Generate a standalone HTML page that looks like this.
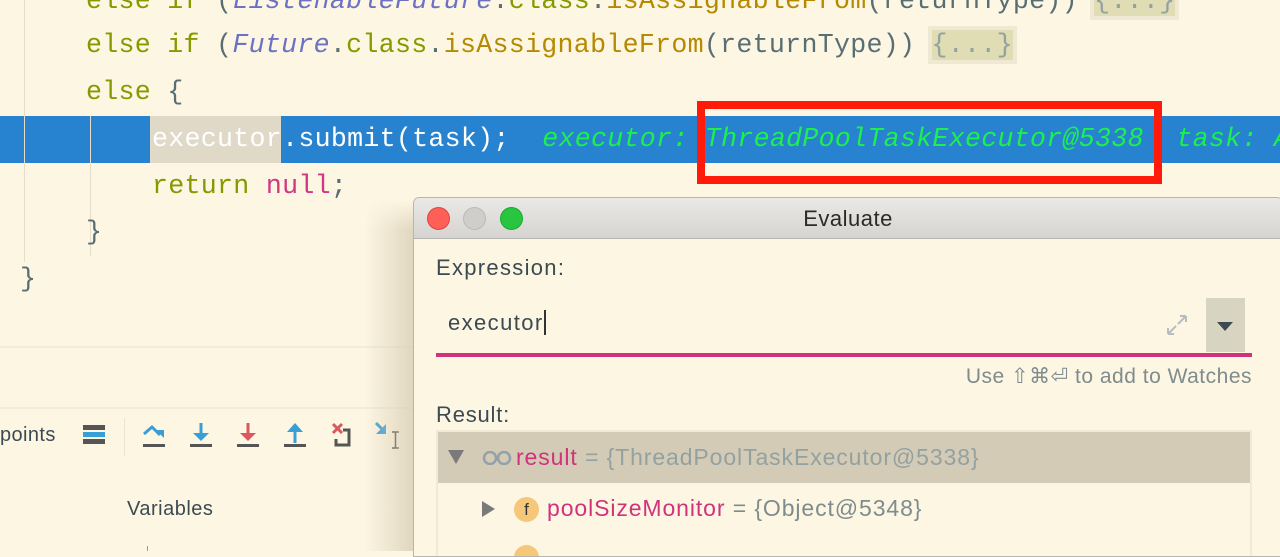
<!DOCTYPE html>
<html><head><meta charset="utf-8"><style>
*{margin:0;padding:0;box-sizing:border-box}
body{width:1280px;height:551px;overflow:hidden;background:#fdf6e3;position:relative;font-family:"Liberation Sans",sans-serif}
.code{position:absolute;font-family:"Liberation Mono","DejaVu Sans Mono",monospace;font-size:26.6px;letter-spacing:0.3px;white-space:pre;line-height:47px;height:47px}
.kw{color:#859900}.cls{color:#6c71c4;font-style:italic}.m{color:#b58900}.p{color:#586e75}.fold{background:#e0ddb4;color:#93a1a1;outline:4px solid #efe9d3}
.abs{position:absolute}
</style></head><body>
<div class="abs" style="left:24px;top:0;width:1px;height:262px;background:#e5ddc8"></div>
<div class="abs" style="left:90px;top:116px;width:1px;height:140px;background:#e5ddc8"></div>
<div class="code" style="left:86px;top:-22px"><span class="kw">else if</span> <span class="p">(</span><span class="cls">ListenableFuture</span><span class="p">.</span><span class="kw">class</span><span class="p">.</span><span class="m">isAssignableFrom</span><span class="p">(returnType))</span> <span class="fold">{...}</span></div>
<div class="code" style="left:86px;top:22px"><span class="kw">else if</span> <span class="p">(</span><span class="cls">Future</span><span class="p">.</span><span class="kw">class</span><span class="p">.</span><span class="m">isAssignableFrom</span><span class="p">(returnType))</span> <span class="fold">{...}</span></div>
<div class="code" style="left:86px;top:69px"><span class="kw">else</span> <span class="p">{</span></div>
<div class="abs" style="left:0;top:116px;width:1280px;height:47px;background:#2783cf"></div>
<div class="abs" style="left:24px;top:116px;width:1px;height:47px;background:#e5ddc8"></div>
<div class="abs" style="left:90px;top:116px;width:1px;height:47px;background:#e5ddc8"></div>
<div class="abs" style="left:150px;top:116px;width:131px;height:47px;background:#e0d9c8"></div>
<div class="code" style="left:152px;top:116px;color:#fff">executor.submit(task);  <span style="color:#1cf04d;font-style:italic">executor: ThreadPoolTaskExecutor@5338  task: A</span></div>
<div class="abs" style="left:697px;top:101px;width:465px;height:83px;border:8px solid #ff1a0a"></div>
<div class="code" style="left:152px;top:163px"><span class="kw">return</span> <span style="color:#d33682">null</span><span class="p">;</span></div>
<div class="code" style="left:86px;top:209px;color:#586e75">}</div>
<div class="code" style="left:20px;top:256px;color:#586e75">}</div>
<div class="abs" style="left:0;top:346px;width:420px;height:2px;background:#f3ecd9"></div>
<div class="abs" style="left:0;top:407px;width:420px;height:2px;background:#f3ecd9"></div>
<div class="abs" style="left:0;top:424px;font-size:20px;letter-spacing:0.4px;color:#3c4a52">points</div>
<div class="abs" style="left:83px;top:425px;width:22px;height:5px;background:#555"></div>
<div class="abs" style="left:83px;top:432px;width:22px;height:5px;background:#389fd6"></div>
<div class="abs" style="left:83px;top:439px;width:22px;height:5px;background:#555"></div>
<div class="abs" style="left:124px;top:418px;width:1px;height:38px;background:#ece4cf"></div>
<svg class="abs" style="left:140px;top:418px" width="270" height="32">
<g stroke-width="3" fill="none">
<path d="M4 16l8-7 8 8" stroke="#389fd6"/><path d="M16 12h8v8z" fill="#389fd6" stroke="none"/><rect x="3" y="26" width="22" height="3" fill="#555" stroke="none"/>
<rect x="50" y="26" width="22" height="3" fill="#555" stroke="none"/><path d="M61 5v14" stroke="#389fd6"/><path d="M53 15h16l-8 8z" fill="#389fd6" stroke="none"/>
<rect x="97" y="26" width="22" height="3" fill="#555" stroke="none"/><path d="M108 5v14" stroke="#db5860"/><path d="M100 15h16l-8 8z" fill="#db5860" stroke="none"/>
<rect x="144" y="26" width="22" height="3" fill="#555" stroke="none"/><path d="M155 25v-12" stroke="#389fd6"/><path d="M147 14h16l-8-9z" fill="#389fd6" stroke="none"/>
<path d="M193 6l9 9M202 6l-9 9" stroke="#db5860"/><path d="M203 12h6v15h-13v-6" stroke="#555"/>
<path d="M236 5l8 8" stroke="#389fd6"/><path d="M236 16h10v-10z" fill="#389fd6" stroke="none"/><path d="M252 14h7M255.5 14v16M252 30h7" stroke="#333" stroke-width="1.5"/>
</g></svg>
<div class="abs" style="left:127px;top:498px;font-size:20px;letter-spacing:0.5px;color:#3c4a52">Variables</div>
<div class="abs" style="left:147px;top:546px;width:1px;height:5px;background:#999"></div>
<div class="abs" style="left:365px;top:200px;width:50px;height:351px;background:linear-gradient(90deg,rgba(253,246,227,0),rgba(215,205,180,0.8));-webkit-mask-image:linear-gradient(rgba(0,0,0,0),#000 30px);mask-image:linear-gradient(rgba(0,0,0,0),#000 30px)"></div>
<div class="abs" style="left:413px;top:197px;width:870px;height:360px;background:#fdf6e3;border:1px solid #b9b5ad;border-radius:6px 6px 0 0;overflow:hidden">
<div style="height:41px;background:linear-gradient(#ebe9e6,#d6d4d1);border-bottom:1px solid #b6b4b0;position:relative;text-align:center;font-size:22px;letter-spacing:0.5px;line-height:41px;color:#2a2a2a">Evaluate
<div class="abs" style="left:13px;top:9px;width:23px;height:23px;border-radius:50%;background:#fe5f57;border:1px solid #e0443e"></div>
<div class="abs" style="left:49px;top:9px;width:23px;height:23px;border-radius:50%;background:#d0cecb;border:1px solid #bcbab6"></div>
<div class="abs" style="left:86px;top:9px;width:23px;height:23px;border-radius:50%;background:#29c440;border:1px solid #1aab2a"></div>
</div>
<div class="abs" style="left:22px;top:57px;font-size:22px;letter-spacing:1.3px;color:#3c4a52">Expression:</div>
<div class="abs" style="left:34px;top:112px;font-size:22px;letter-spacing:1.4px;color:#3c4a52">executor<span style="border-left:2px solid #333;margin-left:0px"></span></div>
<svg class="abs" style="left:750px;top:114px" width="26" height="26"><path d="M4 22l8-8M4 22v-6M4 22h6M22 4l-8 8M22 4v6M22 4h-6" stroke="#b8bcbc" stroke-width="2" fill="none"/></svg>
<div class="abs" style="left:792px;top:100px;width:39px;height:54px;background:#d8d4c2"><svg width="39" height="54"><path d="M11 24h16l-8 9z" fill="#3c4a52"/></svg></div>
<div class="abs" style="left:22px;top:155px;width:816px;height:4px;background:#d0337c"></div>
<div class="abs" style="right:30px;top:166px;font-size:21px;letter-spacing:0.5px;color:#7f8c8d">Use ⇧⌘⏎ to add to Watches</div>
<div class="abs" style="left:22px;top:204px;font-size:22px;letter-spacing:0.8px;color:#3c4a52">Result:</div>
<div class="abs" style="left:22px;top:232px;width:816px;height:140px;border:2px solid #f1ead6;border-bottom:none">
<div style="height:51px;background:#d3cbb6;position:relative;font-size:23px;letter-spacing:0.9px;line-height:51px">
<svg class="abs" style="left:10px;top:18px" width="18" height="16"><path d="M0 0h16l-8 14z" fill="#7a7a7a"/></svg>
<svg class="abs" style="left:44px;top:19px" width="32" height="14"><circle cx="8" cy="7" r="6" stroke="#93a1a8" stroke-width="2.5" fill="none"/><circle cx="22" cy="7" r="6" stroke="#93a1a8" stroke-width="2.5" fill="none"/></svg>
<span class="abs" style="left:78px"><span style="color:#d0337c">result</span><span style="color:#93a1a1"> = {ThreadPoolTaskExecutor@5338}</span></span>
</div>
<div style="height:51px;position:relative;font-size:23px;letter-spacing:0.9px;line-height:51px">
<svg class="abs" style="left:44px;top:18px" width="14" height="18"><path d="M0 0l13 8-13 8z" fill="#7a7a7a"/></svg>
<div class="abs" style="left:76px;top:14px;width:25px;height:25px;border-radius:50%;background:#f5c77b;font-size:17px;letter-spacing:0;line-height:25px;text-align:center;color:#333">f</div>
<span class="abs" style="left:109px"><span style="color:#d0337c">poolSizeMonitor</span><span style="color:#7f8c8d"> = {Object@5348}</span></span>
</div>
<div class="abs" style="left:76px;top:113px;width:25px;height:25px;border-radius:50%;background:#f5c77b"></div>
</div>
</div>
</body></html>
